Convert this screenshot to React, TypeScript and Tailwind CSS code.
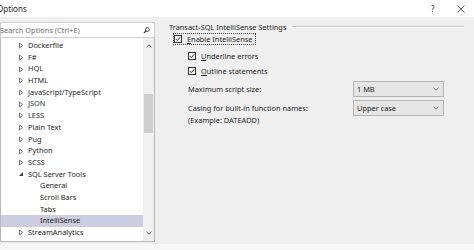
import React from 'react';

const font = { fontFamily: '"Noto Sans", "Liberation Sans", sans-serif' };

type Item = { label: string; level: number; kind: 'closed' | 'open' | 'leaf'; selected?: boolean };

const items: Item[] = [
  { label: 'Dockerfile', level: 0, kind: 'closed' },
  { label: 'F#', level: 0, kind: 'closed' },
  { label: 'HQL', level: 0, kind: 'closed' },
  { label: 'HTML', level: 0, kind: 'closed' },
  { label: 'JavaScript/TypeScript', level: 0, kind: 'closed' },
  { label: 'JSON', level: 0, kind: 'closed' },
  { label: 'LESS', level: 0, kind: 'closed' },
  { label: 'Plain Text', level: 0, kind: 'closed' },
  { label: 'Pug', level: 0, kind: 'closed' },
  { label: 'Python', level: 0, kind: 'closed' },
  { label: 'SCSS', level: 0, kind: 'closed' },
  { label: 'SQL Server Tools', level: 0, kind: 'open' },
  { label: 'General', level: 1, kind: 'leaf' },
  { label: 'Scroll Bars', level: 1, kind: 'leaf' },
  { label: 'Tabs', level: 1, kind: 'leaf' },
  { label: 'IntelliSense', level: 1, kind: 'leaf', selected: true },
  { label: 'StreamAnalytics', level: 0, kind: 'closed' },
];

function Arrow({ kind }: { kind: Item['kind'] }) {
  if (kind === 'open')
    return (
      <svg width="6" height="6" viewBox="0 0 6 6" className="shrink-0">
        <path d="M5 1 L5 5 L1 5 Z" fill="#444" />
      </svg>
    );
  return (
    <svg width="6" height="7" viewBox="0 0 6 7" className="shrink-0">
      <path d="M1.5 1 L4.5 3.5 L1.5 6 Z" fill="none" stroke="#666" strokeWidth="0.9" />
    </svg>
  );
}

function Check({ label, u }: { label: string; u: string }) {
  const rest = label.slice(1);
  return (
    <div className="flex h-[12px] items-center gap-[5px]">
      <svg width="8" height="8" viewBox="0 0 8 8" className="shrink-0">
        <rect x="0.5" y="0.5" width="7" height="7" fill="#fff" stroke="#333" />
        <path d="M1.8 4 L3.3 5.6 L6.3 2.2" fill="none" stroke="#222" strokeWidth="0.9" />
      </svg>
      <span>
        <span className="underline">{u}</span>
        {rest}
      </span>
    </div>
  );
}

function Select({ value }: { value: string }) {
  return (
    <div className="flex h-[16px] w-[91px] items-center justify-between border border-[#b4b4b4] bg-[#e5e5e5] pl-[3px] pr-[4px]">
      <span>{value}</span>
      <svg width="6" height="4" viewBox="0 0 6 4">
        <path d="M0.5 0.8 L3 3.2 L5.5 0.8" fill="none" stroke="#666" strokeWidth="0.9" />
      </svg>
    </div>
  );
}

export default function App() {
  return (
    <div
      className="flex h-[250px] w-[474px] flex-col overflow-hidden bg-[#efefef] text-[7.4px] leading-[12px] text-[#1e1e1e]"
      style={font}
    >
      {/* title bar */}
      <div className="flex h-[17px] shrink-0 items-center bg-white">
        <span className="-ml-[3px] flex-1 text-[8px]">Options</span>
        <span className="w-[26px] text-[8px] text-[#333]">?</span>
        <svg width="8" height="8" viewBox="0 0 8 8" className="mr-[9px]">
          <path d="M0.5 0.5 L7.5 7.5 M7.5 0.5 L0.5 7.5" stroke="#333" strokeWidth="0.8" />
        </svg>
      </div>

      <div className="flex flex-1">
        {/* left column */}
        <div className="flex w-[155px] shrink-0 flex-col pt-[5px]">
          <div className="flex h-[16px] items-center justify-between border border-[#cfcfcf] bg-white pr-[4px]">
            <span className="-ml-[1px] text-[#6d6d6d]">Search Options (Ctrl+E)</span>
            <svg width="7" height="7" viewBox="0 0 7 7">
              <circle cx="4.4" cy="2.6" r="1.9" fill="none" stroke="#333" strokeWidth="0.9" />
              <path d="M3 4 L0.8 6.2" stroke="#333" strokeWidth="1.1" />
            </svg>
          </div>
          <div className="flex h-[204px] border border-t-0 border-[#b9b9b9] bg-white">
            <div className="flex flex-1 flex-col pt-[2px]">
              {items.map((it) => (
                <div
                  key={it.label}
                  className={`flex h-[11.7px] items-center leading-[11.7px] ${it.selected ? 'bg-[#cdcde2]' : ''}`}
                >
                  {it.level === 0 ? (
                    <>
                      <span className="w-[17px] shrink-0" />
                      <Arrow kind={it.kind} />
                      <span className="ml-[4px]">{it.label}</span>
                    </>
                  ) : (
                    <span className="ml-[39px]">{it.label}</span>
                  )}
                </div>
              ))}
            </div>
            {/* scrollbar */}
            <div className="flex w-[11px] shrink-0 flex-col items-center bg-[#f0f0f0]">
              <svg width="6" height="4" viewBox="0 0 6 4" className="mt-[6px]">
                <path d="M0.5 3.2 L3 0.8 L5.5 3.2" fill="none" stroke="#555" strokeWidth="0.9" />
              </svg>
              <div className="mt-[46px] h-[39px] w-[9px] bg-[#cdcdcd]" />
              <div className="flex-1" />
              <svg width="6" height="4" viewBox="0 0 6 4" className="mb-[6px]">
                <path d="M0.5 0.8 L3 3.2 L5.5 0.8" fill="none" stroke="#555" strokeWidth="0.9" />
              </svg>
            </div>
          </div>
        </div>

        {/* right panel */}
        <div className="flex flex-1 flex-col pl-[14px] pt-[4px]">
          <div className="mr-[10px] flex h-[12px] items-center gap-[6px]">
            <span>Transact-SQL IntelliSense Settings</span>
            <div className="h-[2px] flex-1 border-t border-b border-t-[#c9c9c9] border-b-white" />
          </div>
          <div className="ml-[4px] flex">
            <div className="flex h-[12px] items-center border border-dotted border-[#444] pr-[2px]">
              <Check label="Enable IntelliSense" u="E" />
            </div>
          </div>
          <div className="ml-[19px] mt-[5px] flex flex-col gap-[3px]">
            <Check label="Underline errors" u="U" />
            <Check label="Outline statements" u="O" />
          </div>
          <div className="ml-[19px] mr-[30px] mt-[4px] flex items-center justify-between">
            <span>Maximum script size:</span>
            <Select value="1 MB" />
          </div>
          <div className="ml-[19px] mr-[30px] mt-[3px] flex items-center justify-between">
            <span>Casing for built-in function names:</span>
            <Select value="Upper case" />
          </div>
          <div className="ml-[19px] -mt-[2px]">(Example: DATEADD)</div>
        </div>
      </div>
      <div className="h-[6px] shrink-0 bg-[#f7f7f7]" />
    </div>
  );
}
